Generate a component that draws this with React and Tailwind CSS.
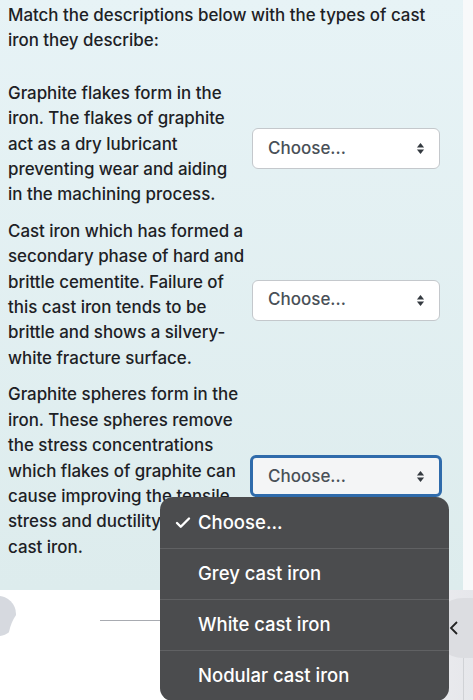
import { Check } from 'lucide-react'

const rows = [
  {
    lines: ['Graphite flakes form in the', 'iron. The flakes of graphite', 'act as a dry lubricant', 'preventing wear and aiding', 'in the machining process.'],
    offset: 'mt-[8px]',
  },
  {
    lines: ['Cast iron which has formed a', 'secondary phase of hard and', 'brittle cementite. Failure of', 'this cast iron tends to be', 'brittle and shows a silvery-', 'white fracture surface.'],
    offset: 'mt-[10px]',
  },
  {
    lines: ['Graphite spheres form in the', 'iron. These spheres remove', 'the stress concentrations', 'which flakes of graphite can', 'cause improving the tensile', 'stress and ductility of the', 'cast iron.'],
    offset: 'mt-[10px]',
    focused: true,
  },
]

function UpDown() {
  return (
    <svg viewBox="0 0 10 14" className="h-[13px] w-[9px]" fill="#343a40">
      <path d="M5 1 9 6H1z" />
      <path d="M5 13 1 8h8z" />
    </svg>
  )
}

function Select({ focused }) {
  return (
    <div
      className={`flex items-center justify-between rounded-[6px] pl-[15px] pr-[14px] text-[17px] text-[#495057] ${
        focused
          ? 'h-[42px] w-[192px] border-[3px] border-[#2f6bab] bg-[#f4f5f6]'
          : 'ml-[2px] h-[41px] w-[188px] border border-[#c4c8cc] bg-white'
      }`}
    >
      <span>Choose...</span>
      <UpDown />
    </div>
  )
}

const options = ['Choose...', 'Grey cast iron', 'White cast iron', 'Nodular cast iron']

export default function App() {
  return (
    <div
      className="relative h-[700px] w-[473px] overflow-hidden bg-[#f8f9fa] text-[#1d2125]"
      style={{ fontFamily: 'Inter, "Noto Sans", sans-serif' }}
    >
      <div className="w-[463px] bg-gradient-to-b from-[#e7f3f6] to-[#ddeced] pb-[30px] pl-[8px] pt-[3px] text-[16.9px] font-medium leading-[25.4px] whitespace-nowrap">
        <p>Match the descriptions below with the types of cast</p>
        <p>iron they describe:</p>
        <div className="mt-[27px] flex flex-col gap-[11px]">
          {rows.map((row, i) => (
            <div key={i} className="flex items-center">
              <div className="w-[242px]">
                {row.lines.map((l) => (
                  <p key={l}>{l}</p>
                ))}
              </div>
              <div className={row.offset}>
                <Select focused={row.focused} />
              </div>
            </div>
          ))}
        </div>
      </div>

      <div className="relative h-[110px] bg-gradient-to-r from-white via-white to-[#e6e7eb]">
        <div className="absolute left-[-20px] top-[6px] h-[40px] w-[36px] rounded-full bg-[#d6d9df]" />
        <div className="absolute left-[8px] top-[2px] h-[110px] w-[140px] rounded-[50px] bg-white" />
        <div className="absolute left-[100px] top-[30px] h-px w-[70px] bg-[#a8abb1]" />
        <div className="absolute right-[-12px] top-[8px] flex h-[60px] w-[52px] items-center rounded-l-full bg-[#dcdde1] pl-[16px]">
          <svg viewBox="0 0 10 16" className="h-[16px] w-[10px]" fill="none" stroke="#222" strokeWidth="1.8">
            <path d="M8 2 2 8l6 6" />
          </svg>
        </div>
        <div className="absolute bottom-0 right-[9px] top-[68px] w-px bg-[#d0d2d6]" />
      </div>

      <div className="absolute left-[160px] top-[497px] w-[289px] rounded-[13px] bg-[#4b4c4e] text-[18.5px] font-medium text-white">
        {options.map((o, i) => (
          <div
            key={o}
            className={`flex h-[51px] items-center pl-[14px] ${i > 0 ? 'border-t border-[#606163]' : ''}`}
          >
            <span className="flex w-[24px] items-center">
              {i === 0 ? <Check size={18} strokeWidth={3.2} /> : null}
            </span>
            <span>{o}</span>
          </div>
        ))}
      </div>
    </div>
  )
}
